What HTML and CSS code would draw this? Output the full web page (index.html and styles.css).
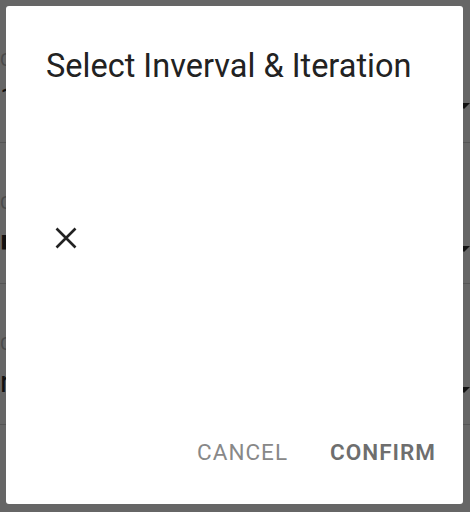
FILE: index.html
```html
<!DOCTYPE html>
<html>
<head>
<meta charset="utf-8">
<link rel="stylesheet" href="styles.css">
</head>
<body>
<div class="screen">
  <div class="row">
    <div class="label">Count</div>
    <div class="value">1</div>
    <div class="caret"></div>
  </div>
  <div class="row">
    <div class="label">Count</div>
    <div class="value">■</div>
    <div class="caret"></div>
  </div>
  <div class="row">
    <div class="label">Count</div>
    <div class="value">r</div>
    <div class="caret"></div>
  </div>
</div>
<div class="dialog">
  <h1 class="title">Select Inverval &amp; Iteration</h1>
  <div class="content">
    <svg class="close" width="22" height="22" viewBox="0 0 22 22">
      <path d="M1.5 1.5 L20.5 20.5 M20.5 1.5 L1.5 20.5" stroke="#222" stroke-width="2.6" fill="none"/>
    </svg>
  </div>
  <div class="actions">
    <span class="btn cancel">CANCEL</span>
    <span class="btn confirm">CONFIRM</span>
  </div>
</div>
</body>
</html>
```
FILE: styles.css
```css
html, body {
  margin: 0;
  padding: 0;
}
body {
  width: 470px;
  height: 512px;
  background: #666666;
  font-family: Roboto, "Noto Sans", sans-serif;
  overflow: hidden;
  position: relative;
}
.screen {
  display: flex;
  flex-direction: column;
}
.row {
  height: 141px;
  border-bottom: 1px solid #555555;
  position: relative;
  box-sizing: border-box;
  padding-left: 0;
}
.row:first-child {
  height: 143px;
}
.label {
  padding-top: 50px;
  font-size: 18px;
  color: #4a4a4a;
  line-height: 20px;
}
.value {
  font-size: 30px;
  color: #111;
  line-height: 36px;
  margin-top: 10px;
}
.caret {
  position: absolute;
  right: 0;
  top: 103px;
  width: 0;
  height: 0;
  border-left: 6px solid transparent;
  border-right: 6px solid transparent;
  border-top: 6px solid #111;
}
.dialog {
  position: absolute;
  left: 6px;
  top: 6px;
  width: 457px;
  height: 498px;
  background: #ffffff;
  border-radius: 3px;
  display: flex;
  flex-direction: column;
  box-sizing: border-box;
}
.title {
  margin: 0;
  padding: 42px 0 0 40px;
  font-weight: 400;
  font-size: 32.5px;
  line-height: 36px;
  color: #222222;
}
.content {
  flex: 1;
  padding: 0 0 0 49px;
  display: flex;
  align-items: flex-start;
}
.close {
  margin-top: 143px;
}
.actions {
  display: flex;
  justify-content: flex-end;
  align-items: center;
  gap: 42px;
  padding: 0 27px 40px 0;
}
.btn {
  font-size: 22.5px;
  letter-spacing: 1px;
  line-height: 24px;
  color: #888888;
}
.confirm {
  font-weight: 600;
  color: #6e6e6e;
}
```
